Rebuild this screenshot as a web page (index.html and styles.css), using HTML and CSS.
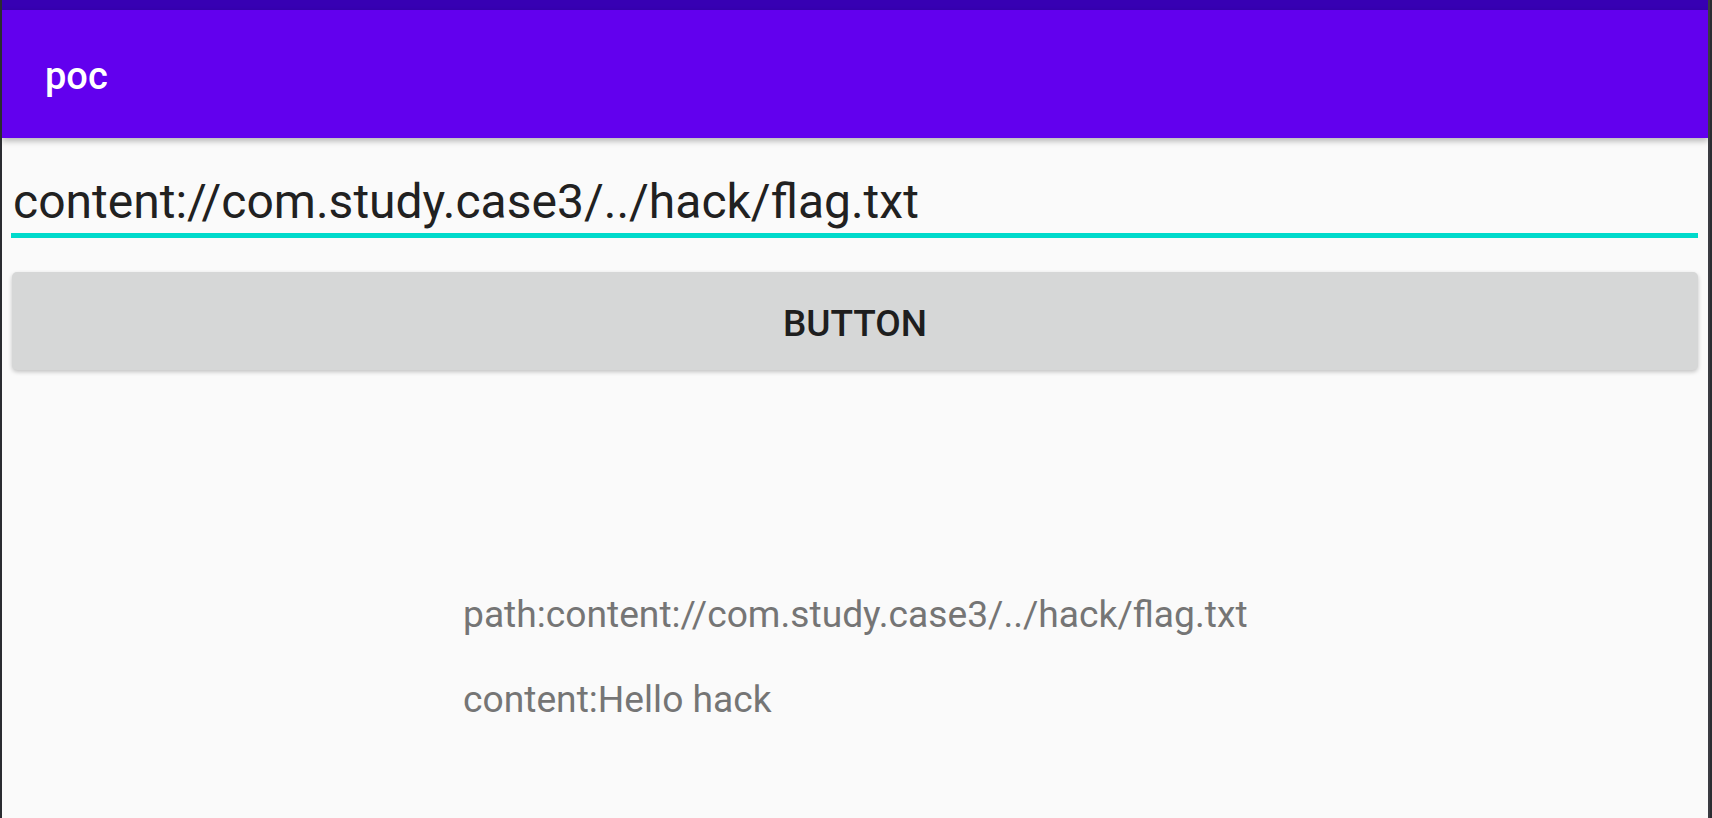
FILE: index.html
```html
<!DOCTYPE html>
<html>
<head>
<meta charset="utf-8">
<link rel="stylesheet" href="styles.css">
</head>
<body>
<div class="frame">
  <div class="screen">
    <div class="status"></div>
    <div class="toolbar"><span class="title">poc</span></div>
    <div class="field">content://com.study.case3/../hack/flag.txt</div>
    <div class="button">BUTTON</div>
    <div class="results">
      <div class="line path">path:content://com.study.case3/../hack/flag.txt</div>
      <div class="line content">content:Hello hack</div>
    </div>
  </div>
  <div class="edge"></div>
</div>
</body>
</html>
```
FILE: styles.css
```css
html, body {
  margin: 0;
  padding: 0;
  background: #2a2c31;
  overflow: hidden;
}
.frame {
  display: flex;
  height: 818px;
  width: 1712px;
  padding-left: 2px;
  box-sizing: border-box;
}
.screen {
  width: 1706px;
  height: 818px;
  background: #fafafa;
  display: flex;
  flex-direction: column;
  overflow: hidden;
  font-family: Roboto, "Liberation Sans", sans-serif;
}
.edge {
  width: 4px;
  border-left: 2px solid #3a3c42;
  box-sizing: border-box;
}
.status {
  height: 10px;
  background: #3700b3;
  flex: none;
}
.toolbar {
  height: 128px;
  flex: none;
  background: #6200ee;
  display: flex;
  align-items: center;
  padding-left: 43px;
  padding-top: 4px;
  box-sizing: border-box;
  box-shadow: 0 3px 6px rgba(0, 0, 0, 0.28);
  position: relative;
  z-index: 1;
}
.title {
  color: #ffffff;
  font-size: 38px;
  font-weight: 500;
}
.field {
  margin: 35px 10px 0 9px;
  padding: 0 0 3px 2px;
  border-bottom: 5px solid #00dacb;
  font-size: 48px;
  color: #212121;
  white-space: nowrap;
}
.button {
  margin: 34px 10px 0 10px;
  height: 98px;
  box-sizing: border-box;
  padding-top: 5px;
  background: #d6d7d7;
  border-radius: 5px;
  box-shadow: 0 2px 4px rgba(0, 0, 0, 0.22);
  display: flex;
  align-items: center;
  justify-content: center;
  font-size: 37px;
  font-weight: 500;
  letter-spacing: 0;
  color: #1e1e1e;
}
.results {
  display: flex;
  flex-direction: column;
  padding-left: 461px;
  padding-top: 222px;
  gap: 41px;
}
.line {
  font-size: 37.2px;
  color: #757575;
  white-space: nowrap;
}
```
